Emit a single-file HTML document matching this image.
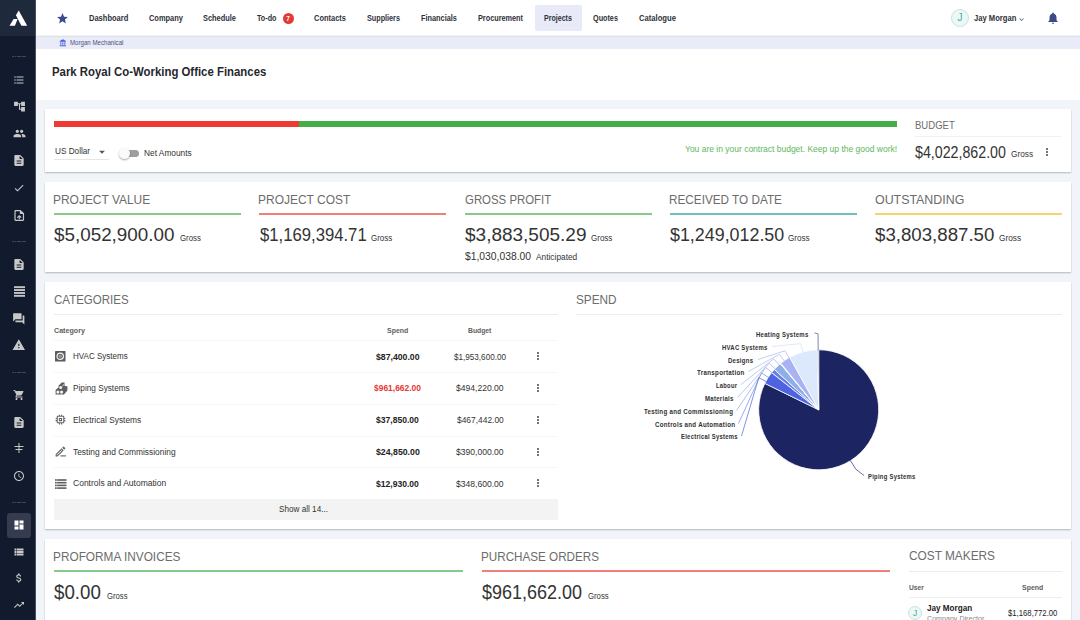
<!DOCTYPE html>
<html><head><meta charset="utf-8">
<style>
*{margin:0;padding:0;box-sizing:border-box}
html,body{width:1080px;height:620px;overflow:hidden;background:#f1f4f8;font-family:"Liberation Sans",sans-serif;color:#222;position:relative}
.abs{position:absolute}
.t{position:absolute;height:20px;line-height:20px;white-space:nowrap;transform-origin:0 0}
.card{position:absolute;background:#fff;box-shadow:0 1px 1.5px rgba(0,0,0,.25)}
.ln{position:absolute;height:2px}
.hl{position:absolute;height:1px;background:#ececec}
.rl{position:absolute;height:1px;background:#f6f6f6}
.si{position:absolute;left:13px;width:12px;height:12px}
.si path{fill:#c8c8c8}
.sep{position:absolute;left:12px;width:13.5px;height:1px;background:repeating-linear-gradient(90deg,#3d4864 0 1.5px,#1e2740 1.5px 2.5px)}
svg.abs{overflow:visible}
</style></head><body>
<!-- sidebar -->
<div class="abs" style="left:0;top:0;width:36px;height:620px;background:#121a2d"></div>
<div class="abs" style="left:0;top:0;width:36px;height:36px;background:#1f293c"></div>
<svg class="abs" style="left:0;top:0" width="36" height="36" viewBox="0 0 36 36">
  <path d="M18.7,10.6 L27.2,25.8 L21.4,25.8 L15.9,15.2 Z" fill="#fff"/>
  <path d="M13.6,19 L17.6,19 L14.9,25.8 L9.5,25.8 Z" fill="#fff"/>
</svg>
<div class="abs" style="left:35px;top:0;width:1px;height:620px;background:#4a505c"></div>

<div class="sep" style="top:56px"></div>
<svg class="si" style="top:73.5px;left:12.5px" viewBox="0 0 24 24"><path d="M4 10.5c-.83 0-1.5.67-1.5 1.5s.67 1.5 1.5 1.5 1.5-.67 1.5-1.5-.67-1.5-1.5-1.5zm0-6c-.83 0-1.5.67-1.5 1.5S3.17 7.5 4 7.5 5.5 6.83 5.5 6 4.83 4.5 4 4.5zm0 12c-.83 0-1.5.68-1.5 1.5s.68 1.5 1.5 1.5 1.5-.68 1.5-1.5-.67-1.5-1.5-1.5zM7 19h14v-2H7v2zm0-6h14v-2H7v2zm0-8v2h14V5H7z"/></svg>
<svg class="si" style="top:99.8px;left:12.5px;width:13px;height:13px" viewBox="0 0 24 24"><path d="M22 11V3h-7v3H9V3H2v8h7V8h2v10h4v3h7v-8h-7v3h-2V8h2v3z"/></svg>
<svg class="si" style="top:127px;left:13px;width:13px;height:13px" viewBox="0 0 24 24"><path d="M16 11c1.66 0 2.99-1.34 2.99-3S17.66 5 16 5c-1.66 0-3 1.34-3 3s1.34 3 3 3zm-8 0c1.66 0 2.99-1.34 2.99-3S9.66 5 8 5C6.34 5 5 6.34 5 8s1.34 3 3 3zm0 2c-2.33 0-7 1.17-7 3.5V19h14v-2.5c0-2.330-4.67-3.5-7-3.5zm8 0c-.29 0-.62.02-.97.05 1.16.84 1.970 1.97 1.97 3.45V19h6v-2.5c0-2.33-4.67-3.5-7-3.5z"/></svg>
<svg class="si" style="top:154px;left:11.5px;width:14px;height:13px" preserveAspectRatio="none" viewBox="0 0 24 24"><path d="M14 2H6c-1.1 0-1.99.9-1.99 2L4 20c0 1.1.89 2 1.99 2H18c1.1 0 2-.9 2-2V8l-6-6zm2 16H8v-2h8v2zm0-4H8v-2h8v2zm-3-5V3.5L18.5 9H13z"/></svg>
<svg class="si" style="top:182px" viewBox="0 0 24 24"><path d="M9 16.17L4.83 12l-1.42 1.41L9 19 21 7l-1.41-1.41z"/></svg>
<svg class="si" style="top:208.5px;left:11.5px;width:14.5px;height:13px" preserveAspectRatio="none" viewBox="0 0 24 24"><path d="M14 2H6c-1.1 0-1.99.9-1.99 2L4 20c0 1.1.89 2 1.99 2H18c1.1 0 2-.9 2-2V8l-6-6zm4 18H6V4h7v5h5v11zM8 15.01l1.41 1.41L11 14.84V19h2v-4.16l1.59 1.59L16 15.01 12.01 11z"/></svg>
<div class="sep" style="top:241px"></div>
<svg class="si" style="top:257.5px;left:11.5px;width:14px;height:13px" preserveAspectRatio="none" viewBox="0 0 24 24"><path d="M14 2H6c-1.1 0-1.99.9-1.99 2L4 20c0 1.1.89 2 1.99 2H18c1.1 0 2-.9 2-2V8l-6-6zm2 16H8v-2h8v2zm0-4H8v-2h8v2zm-3-5V3.5L18.5 9H13z"/></svg>
<svg class="abs" style="left:13.5px;top:286px" width="11" height="11" viewBox="0 0 11 11"><g fill="#c4c4c4"><rect x="0" y="0.2" width="11" height="1.9"/><rect x="0" y="3.1" width="11" height="1.9"/><rect x="0" y="6" width="11" height="1.9"/><rect x="0" y="8.9" width="11" height="1.9"/></g></svg>
<svg class="si" style="top:311.5px;left:12.3px;width:13.5px;height:13.5px" viewBox="0 0 24 24"><path d="M21 6h-2v9H6v2c0 .55.45 1 1 1h11l4 4V7c0-.55-.45-1-1-1zm-4 6V3c0-.55-.45-1-1-1H3c-.55 0-1 .45-1 1v14l4-4h10c.55 0 1-.45 1-1z"/></svg>
<svg class="si" style="top:338px;left:12.2px;width:13.6px;height:13.6px" viewBox="0 0 24 24"><path d="M1 21h22L12 2 1 21zm12-3h-2v-2h2v2zm0-4h-2v-4h2v4z"/></svg>
<div class="sep" style="top:372px"></div>
<svg class="si" style="top:389px" viewBox="0 0 24 24"><path d="M7 18c-1.1 0-1.99.9-1.99 2S5.9 22 7 22s2-.9 2-2-.9-2-2-2zM1 2v2h2l3.6 7.59-1.35 2.45c-.16.28-.25.61-.25.96 0 1.1.9 2 2 2h12v-2H7.42c-.14 0-.25-.11-.25-.25l.03-.12.9-1.63h7.45c.75 0 1.41-.41 1.75-1.03l3.58-6.49A1.003 1.003 0 0020 4H5.21l-.94-2H1zm16 16c-1.1 0-1.99.9-1.99 2s.89 2 1.99 2 2-.9 2-2-.9-2-2-2z"/></svg>
<svg class="si" style="top:415.5px;left:11.5px;width:14px;height:13px" preserveAspectRatio="none" viewBox="0 0 24 24"><path d="M14 2H6c-1.1 0-1.99.9-1.99 2L4 20c0 1.1.89 2 1.99 2H18c1.1 0 2-.9 2-2V8l-6-6zm2 16H8v-2h8v2zm0-4H8v-2h8v2zm-3-5V3.5L18.5 9H13z"/></svg>
<svg class="si" style="top:442px" viewBox="0 0 24 24"><path d="M11 2h2v6h8v2h-8v4h6v2h-6v6h-2v-6H5v-2h6v-4H3V8h8V2z"/></svg>
<svg class="si" style="top:470px" viewBox="0 0 24 24"><path d="M11.99 2C6.47 2 2 6.48 2 12s4.47 10 9.99 10C17.52 22 22 17.52 22 12S17.52 2 11.99 2zM12 20c-4.42 0-8-3.58-8-8s3.58-8 8-8 8 3.58 8 8-3.58 8-8 8zm.5-13H11v6l5.25 3.15.75-1.23-4.5-2.67z"/></svg>
<div class="sep" style="top:502px"></div>
<div class="abs" style="left:7px;top:513px;width:24px;height:25px;background:#353c50;border-radius:3px"></div>
<svg class="si" style="top:519px;left:13px" viewBox="0 0 24 24"><path style="fill:#fff" d="M3 13h8V3H3v10zm0 8h8v-6H3v6zm10 0h8V11h-8v10zm0-18v6h8V3h-8z"/></svg>
<svg class="si" style="top:546px" viewBox="0 0 24 24"><path d="M3 14h4v-4H3v4zm0 5h4v-4H3v4zM3 9h4V5H3v4zm5 5h13v-4H8v4zm0 5h13v-4H8v4zM8 5v4h13V5H8z"/></svg>
<svg class="si" style="top:572px" viewBox="0 0 24 24"><path d="M11.8 10.9c-2.27-.59-3-1.2-3-2.15 0-1.09 1.01-1.85 2.7-1.85 1.78 0 2.440.85 2.5 2.1h2.21c-.07-1.72-1.12-3.3-3.21-3.81V3h-3v2.16c-1.94.42-3.5 1.68-3.5 3.61 0 2.31 1.91 3.46 4.7 4.13 2.5.6 3 1.48 3 2.41 0 .69-.49 1.79-2.7 1.79-2.06 0-2.87-.92-2.98-2.1h-2.2c.12 2.19 1.76 3.42 3.68 3.83V21h3v-2.15c1.95-.37 3.5-1.5 3.5-3.55 0-2.84-2.43-3.81-4.7-4.4z"/></svg>
<svg class="si" style="top:599px" viewBox="0 0 24 24"><path d="M16 6l2.29 2.29-4.88 4.88-4-4L2 16.59 3.41 18l6-6 4 4 6.3-6.290L22 12V6z"/></svg>

<!-- nav -->
<div class="abs" style="left:36px;top:0;width:1044px;height:37px;background:#fff;border-bottom:1px solid #e0e2ea;box-shadow:0 -1px 0 #f3f4f7 inset"></div>
<svg class="abs" style="left:56px;top:11.5px" width="13" height="13" viewBox="0 0 24 24"><path fill="#3b4a8a" d="M12 17.27L18.18 21l-1.64-7.03L22 9.24l-7.19-.61L12 2 9.19 8.63 2 9.24l5.46 4.730L5.82 21z"/></svg>
<div class="abs" style="left:282.5px;top:12.5px;width:11px;height:11px;border-radius:50%;background:#e53935"></div>
<div class="abs" style="left:282.5px;top:12.5px;width:11px;height:11px;line-height:11px;text-align:center;font-size:6.5px;font-weight:bold;color:#fff">7</div>
<div class="abs" style="left:534.5px;top:5px;width:47px;height:26px;background:#e8eaf8;border-radius:2px"></div>
<div class="abs" style="left:951px;top:9px;width:18px;height:18px;border-radius:50%;background:#eaf8f7;border:1px solid #c9e3dc"></div>
<div class="abs" style="left:951px;top:9px;width:18px;height:18px;line-height:18px;text-align:center;font-size:10px;color:#4aae98">J</div>
<svg class="abs" style="left:1017px;top:15px" width="9" height="9" viewBox="0 0 24 24"><path fill="#4a5580" d="M16.59 8.59L12 13.17 7.41 8.59 6 10l6 6 6-6z"/></svg>
<svg class="abs" style="left:1046px;top:11px" width="14" height="14" viewBox="0 0 24 24"><path fill="#3d4a85" d="M12 22c1.1 0 2-.9 2-2h-4c0 1.1.89 2 2 2zm6-6v-5c0-3.07-1.64-5.640-4.5-6.32V4c0-.83-.67-1.5-1.5-1.5s-1.5.67-1.5 1.5v.68C7.63 5.36 6 7.92 6 11v5l-2 2v1h16v-1l-2-2z"/></svg>

<!-- crumb -->
<div class="abs" style="left:36px;top:37px;width:1044px;height:12px;background:#e9ebf8"></div>
<svg class="abs" style="left:59px;top:38.5px" width="8" height="8" viewBox="0 0 24 24"><path fill="#4a5fd8" d="M4 10v7h3v-7H4zm6 0v7h3v-7h-3zM2 22h19v-3H2v3zm14-12v7h3v-7h-3zm-4.5-9L2 6v2h19V6l-9.5-5z"/></svg>
<div class="abs" style="left:36px;top:49px;width:1044px;height:51px;background:#fff"></div>

<!-- card 1 -->
<div class="card" style="left:45px;top:109px;width:1026px;height:63px"></div>
<div class="abs" style="left:54px;top:120.5px;width:245px;height:6px;background:#ef3a33"></div>
<div class="abs" style="left:299px;top:120.5px;width:598px;height:6px;background:#44ad48"></div>
<div class="abs" style="left:54px;top:159px;width:55px;height:1px;background:#e6e6e6"></div>
<svg class="abs" style="left:95px;top:144.5px" width="14" height="14" viewBox="0 0 24 24"><path fill="#555" d="M7 10l5 5 5-5z"/></svg>
<div class="abs" style="left:121.5px;top:149.5px;width:17px;height:7px;border-radius:4px;background:#9e9e9e"></div>
<div class="abs" style="left:118.8px;top:147.8px;width:11.2px;height:11.2px;border-radius:50%;background:#fafafa;box-shadow:0 1px 2px rgba(0,0,0,.35)"></div>
<div class="hl" style="left:915px;top:136px;width:146px;background:#f0f0f0"></div>
<svg class="abs" style="left:1041px;top:146px" width="12" height="12" viewBox="0 0 24 24"><path fill="#555" d="M12 8c1.1 0 2-.9 2-2s-.9-2-2-2-2 .9-2 2 .9 2 2 2zm0 2c-1.1 0-2 .9-2 2s.9 2 2 2 2-.9 2-2-.9-2-2-2zm0 6c-1.1 0-2 .9-2 2s.9 2 2 2 2-.9 2-2-.9-2-2-2z"/></svg>

<!-- card 2 -->
<div class="card" style="left:45px;top:182px;width:1026px;height:89.5px"></div>
<div class="ln" style="left:54px;top:213px;width:187px;background:#86c98a"></div>
<div class="ln" style="left:259px;top:213px;width:187px;background:#ef8077"></div>
<div class="ln" style="left:464.5px;top:213px;width:187px;background:#86c98a"></div>
<div class="ln" style="left:670px;top:213px;width:187px;background:#6fbfbf"></div>
<div class="ln" style="left:875px;top:213px;width:187px;background:#f7d36f"></div>

<!-- card 3 -->
<div class="card" style="left:45px;top:281.5px;width:1026px;height:247px"></div>
<div class="hl" style="left:54px;top:313.5px;width:504px"></div>
<div class="hl" style="left:576px;top:313.5px;width:486px"></div>
<div class="rl" style="left:54px;top:340px;width:504px"></div>
<div class="rl" style="left:54px;top:372px;width:504px"></div>
<div class="rl" style="left:54px;top:403.5px;width:504px"></div>
<div class="rl" style="left:54px;top:435.5px;width:504px"></div>
<div class="rl" style="left:54px;top:467px;width:504px"></div>
<div class="abs" style="left:54px;top:499px;width:504px;height:21px;background:#f3f3f3"></div>
<!-- category icons -->
<svg class="abs" style="left:55.2px;top:351.3px" width="10.5" height="10.5" viewBox="0 0 10.5 10.5"><rect x="0" y="0" width="10.5" height="10.5" rx="0.6" fill="#5c5c5c"/><circle cx="5.25" cy="5.25" r="3.2" fill="none" stroke="#f2f2f2" stroke-width="1.2"/><circle cx="5.25" cy="5.25" r="1.7" fill="#9a9a9a"/></svg>
<svg class="abs" style="left:54.5px;top:381.5px" width="13" height="13" viewBox="0 0 13 13"><path fill="#5e5e5e" d="M0.6 8 L3.6 5.2 L3.6 3.4 L6.8 0.6 L9.6 0.6 L9.6 4 L12.4 4.2 L12.4 8.6 L9 12.4 L0.6 12.4 Z"/><circle cx="2.9" cy="10.1" r="1.55" fill="#f4f4f4"/><circle cx="6.6" cy="10.1" r="1.55" fill="#f4f4f4"/><circle cx="5.7" cy="5.6" r="1.5" fill="#f4f4f4"/><path d="M7.2 4.2 L9.4 2" stroke="#f4f4f4" stroke-width="0.9"/></svg>
<svg class="abs" style="left:54.3px;top:412.8px" width="13" height="13" viewBox="0 0 24 24"><path fill="#666" d="M15 9H9v6h6V9zm-2 4h-2v-2h2v2zm8-2V9h-2V7c0-1.1-.9-2-2-2h-2V3h-2v2h-2V3H9v2H7c-1.1 0-2 .9-2 2v2H3v2h2v2H3v2h2v2c0 1.1.9 2 2 2h2v2h2v-2h2v2h2v-2h2c1.1 0 2-.9 2-2v-2h2v-2h-2v-2h2zm-4 6H7V7h10v10z"/></svg>
<svg class="abs" style="left:54px;top:445px" width="13" height="13" viewBox="0 0 24 24"><path fill="#666" d="M3 17.25V21h3.75L17.81 9.94l-3.75-3.75L3 17.25zM5.92 19H5v-.92l9.06-9.06.92.92L5.92 19zM20.71 5.63l-2.34-2.34a1 1 0 0 0-1.41 0l-1.83 1.83 3.75 3.75 1.83-1.83a1 1 0 0 0 0-1.41z"/><path fill="#666" d="M12 19h10v2.2H12z"/></svg>
<svg class="abs" style="left:55px;top:478.5px" width="11.5" height="10" viewBox="0 0 11.5 10"><g fill="#5e5e5e"><rect x="0" y="0.2" width="11.5" height="1.6"/><rect x="0" y="2.9" width="11.5" height="1.6"/><rect x="0" y="5.6" width="11.5" height="1.6"/><rect x="0" y="8.3" width="11.5" height="1.6"/></g><rect x="1.6" y="0" width="0.6" height="10" fill="#fff" opacity="0.6"/></svg>
<!-- kebabs -->
<svg class="abs" style="left:532px;top:350px" width="12" height="12" viewBox="0 0 24 24"><path fill="#555" d="M12 8c1.1 0 2-.9 2-2s-.9-2-2-2-2 .9-2 2 .9 2 2 2zm0 2c-1.1 0-2 .9-2 2s.9 2 2 2 2-.9 2-2-.9-2-2-2zm0 6c-1.1 0-2 .9-2 2s.9 2 2 2 2-.9 2-2-.9-2-2-2z"/></svg>
<svg class="abs" style="left:532px;top:382px" width="12" height="12" viewBox="0 0 24 24"><path fill="#555" d="M12 8c1.1 0 2-.9 2-2s-.9-2-2-2-2 .9-2 2 .9 2 2 2zm0 2c-1.1 0-2 .9-2 2s.9 2 2 2 2-.9 2-2-.9-2-2-2zm0 6c-1.1 0-2 .9-2 2s.9 2 2 2 2-.9 2-2-.9-2-2-2z"/></svg>
<svg class="abs" style="left:532px;top:414px" width="12" height="12" viewBox="0 0 24 24"><path fill="#555" d="M12 8c1.1 0 2-.9 2-2s-.9-2-2-2-2 .9-2 2 .9 2 2 2zm0 2c-1.1 0-2 .9-2 2s.9 2 2 2 2-.9 2-2-.9-2-2-2zm0 6c-1.1 0-2 .9-2 2s.9 2 2 2 2-.9 2-2-.9-2-2-2z"/></svg>
<svg class="abs" style="left:532px;top:445.5px" width="12" height="12" viewBox="0 0 24 24"><path fill="#555" d="M12 8c1.1 0 2-.9 2-2s-.9-2-2-2-2 .9-2 2 .9 2 2 2zm0 2c-1.1 0-2 .9-2 2s.9 2 2 2 2-.9 2-2-.9-2-2-2zm0 6c-1.1 0-2 .9-2 2s.9 2 2 2 2-.9 2-2-.9-2-2-2z"/></svg>
<svg class="abs" style="left:532px;top:477px" width="12" height="12" viewBox="0 0 24 24"><path fill="#555" d="M12 8c1.1 0 2-.9 2-2s-.9-2-2-2-2 .9-2 2 .9 2 2 2zm0 2c-1.1 0-2 .9-2 2s.9 2 2 2 2-.9 2-2-.9-2-2-2zm0 6c-1.1 0-2 .9-2 2s.9 2 2 2 2-.9 2-2-.9-2-2-2z"/></svg>

<!-- card 4 -->
<div class="card" style="left:45px;top:538.5px;width:1026px;height:90px"></div>
<div class="ln" style="left:54px;top:570px;width:409px;background:#86c98a"></div>
<div class="ln" style="left:481.5px;top:570px;width:408.5px;background:#ef8077"></div>
<div class="hl" style="left:908.5px;top:571px;width:153px"></div>
<div class="rl" style="left:908.5px;top:597px;width:153px;background:#efefef"></div>
<div class="abs" style="left:908px;top:605.5px;width:14px;height:14px;border-radius:50%;background:#eaf8f7;border:1px solid #c9e3dc"></div>
<div class="abs" style="left:908px;top:605.5px;width:14px;height:14px;line-height:14px;text-align:center;font-size:8.5px;color:#4aae98">J</div>

<svg class="abs" style="left:0;top:0" width="1080" height="620" viewBox="0 0 1080 620">
<path d="M818.7,409.8 L818.70,349.80 A60,60 0 1 1 764.82,383.40 Z" fill="#1c2462" stroke="#fff" stroke-width="0.8" stroke-linejoin="round"/>
<path d="M818.7,409.8 L764.82,383.40 A60,60 0 0 1 771.61,372.61 Z" fill="#4d63e0" stroke="#fff" stroke-width="0.8" stroke-linejoin="round"/>
<path d="M818.7,409.8 L771.61,372.61 A60,60 0 0 1 774.32,369.42 Z" fill="#6b80e6" stroke="#fff" stroke-width="0.8" stroke-linejoin="round"/>
<path d="M818.7,409.8 L774.32,369.42 A60,60 0 0 1 780.37,363.64 Z" fill="#90aee6" stroke="#fff" stroke-width="0.8" stroke-linejoin="round"/>
<path d="M818.7,409.8 L780.37,363.64 A60,60 0 0 1 780.54,363.50 Z" fill="#9fb8ee" stroke="#fff" stroke-width="0.8" stroke-linejoin="round"/>
<path d="M818.7,409.8 L780.54,363.50 A60,60 0 0 1 780.70,363.37 Z" fill="#a3b0f0" stroke="#fff" stroke-width="0.8" stroke-linejoin="round"/>
<path d="M818.7,409.8 L780.70,363.37 A60,60 0 0 1 780.86,363.24 Z" fill="#a6b2f0" stroke="#fff" stroke-width="0.8" stroke-linejoin="round"/>
<path d="M818.7,409.8 L780.86,363.24 A60,60 0 0 1 789.79,357.22 Z" fill="#a9b3f2" stroke="#fff" stroke-width="0.8" stroke-linejoin="round"/>
<path d="M818.7,409.8 L789.79,357.22 A60,60 0 0 1 817.44,349.81 Z" fill="#dce8fb" stroke="#fff" stroke-width="0.8" stroke-linejoin="round"/>
<path d="M818.7,409.8 L817.44,349.81 A60,60 0 0 1 818.70,349.80 Z" fill="#4a4f66" stroke="#fff" stroke-width="0.8" stroke-linejoin="round"/>
<path d="M814.5,333 L818.04,333.80 L818.18,350.30" fill="none" stroke="#6a72a0" stroke-width="0.85" stroke-linejoin="round"/>
<path d="M772,346.5 L800.74,343.70 L803.10,352.38" fill="none" stroke="#d8e5fa" stroke-width="0.85" stroke-linejoin="round"/>
<path d="M758,359.5 L784.91,350.79 L789.13,358.17" fill="none" stroke="#bcc3f4" stroke-width="0.85" stroke-linejoin="round"/>
<path d="M748.5,371.5 L779.50,354.23 L784.40,361.18" fill="none" stroke="#b5c8f0" stroke-width="0.85" stroke-linejoin="round"/>
<path d="M741,384.5 L773.73,358.79 L779.35,365.17" fill="none" stroke="#b0c0f0" stroke-width="0.85" stroke-linejoin="round"/>
<path d="M737.5,397.5 L769.21,363.16 L775.40,368.99" fill="none" stroke="#a8bcf0" stroke-width="0.85" stroke-linejoin="round"/>
<path d="M736.5,410.5 L765.56,367.38 L772.20,372.68" fill="none" stroke="#9cb6ea" stroke-width="0.85" stroke-linejoin="round"/>
<path d="M738.5,423.5 L761.54,372.96 L768.69,377.57" fill="none" stroke="#8a9cec" stroke-width="0.85" stroke-linejoin="round"/>
<path d="M741.5,436 L758.77,377.67 L766.26,381.68" fill="none" stroke="#6a7ee6" stroke-width="0.85" stroke-linejoin="round"/>
<path d="M864,475.5 L855.79,469.16 L850.23,460.26" fill="none" stroke="#4a5590" stroke-width="0.85" stroke-linejoin="round"/><!--PIELINES--></svg>
<div class="t" style="left:89.00px;top:7.95px;font-size:8.8px;font-weight:bold;color:#2f3139;transform:scaleX(0.8558)">Dashboard</div>
<div class="t" style="left:149.00px;top:7.95px;font-size:8.8px;font-weight:bold;color:#2f3139;transform:scaleX(0.8460)">Company</div>
<div class="t" style="left:203.00px;top:7.95px;font-size:8.8px;font-weight:bold;color:#2f3139;transform:scaleX(0.8415)">Schedule</div>
<div class="t" style="left:257.00px;top:7.95px;font-size:8.8px;font-weight:bold;color:#2f3139;transform:scaleX(0.8198)">To-do</div>
<div class="t" style="left:314.00px;top:7.95px;font-size:8.8px;font-weight:bold;color:#2f3139;transform:scaleX(0.8478)">Contacts</div>
<div class="t" style="left:367.00px;top:7.95px;font-size:8.8px;font-weight:bold;color:#2f3139;transform:scaleX(0.8211)">Suppliers</div>
<div class="t" style="left:421.00px;top:7.95px;font-size:8.8px;font-weight:bold;color:#2f3139;transform:scaleX(0.8347)">Financials</div>
<div class="t" style="left:478.00px;top:7.95px;font-size:8.8px;font-weight:bold;color:#2f3139;transform:scaleX(0.8282)">Procurement</div>
<div class="t" style="left:544.00px;top:7.95px;font-size:8.8px;font-weight:bold;color:#2f3139;transform:scaleX(0.8041)">Projects</div>
<div class="t" style="left:593.00px;top:7.95px;font-size:8.8px;font-weight:bold;color:#2f3139;transform:scaleX(0.8221)">Quotes</div>
<div class="t" style="left:639.00px;top:7.95px;font-size:8.8px;font-weight:bold;color:#2f3139;transform:scaleX(0.8679)">Catalogue</div>
<div class="t" style="left:974.00px;top:7.95px;font-size:8.8px;font-weight:bold;color:#2f3139;transform:scaleX(0.8658)">Jay Morgan</div>
<div class="t" style="left:70.00px;top:33.02px;font-size:6.3px;font-weight:normal;color:#4b5080;transform:scaleX(0.9716)">Morgan Mechanical</div>
<div class="t" style="left:52.00px;top:61.80px;font-size:12.4px;font-weight:bold;color:#26272d;transform:scaleX(0.9190)">Park Royal Co-Working Office Finances</div>
<div class="t" style="left:55.00px;top:141.31px;font-size:9.2px;font-weight:normal;color:#333;transform:scaleX(0.8917)">US Dollar</div>
<div class="t" style="left:144.00px;top:143.09px;font-size:8.4px;font-weight:normal;color:#333;transform:scaleX(0.9954)">Net Amounts</div>
<div class="t" style="left:685.00px;top:138.72px;font-size:8.6px;font-weight:normal;color:#5cb85c;transform:scaleX(0.9879)">You are in your contract budget. Keep up the good work!</div>
<div class="t" style="left:915.00px;top:115.49px;font-size:11px;font-weight:normal;color:#6c6c6c;transform:scaleX(0.8673)">BUDGET</div>
<div class="t" style="left:915.00px;top:143.46px;font-size:16px;font-weight:normal;color:#333;transform:scaleX(0.8885)">$4,022,862.00</div>
<div class="t" style="left:1011.00px;top:145.36px;font-size:8.2px;font-weight:normal;color:#333;transform:scaleX(1.0119)">Gross</div>
<div class="t" style="left:53.47px;top:189.96px;font-size:12.8px;font-weight:normal;color:#6c6c6c;transform:scaleX(0.9342)">PROJECT VALUE</div>
<div class="t" style="left:258.06px;top:189.96px;font-size:12.8px;font-weight:normal;color:#6c6c6c;transform:scaleX(0.9356)">PROJECT COST</div>
<div class="t" style="left:464.80px;top:189.96px;font-size:12.8px;font-weight:normal;color:#6c6c6c;transform:scaleX(0.8918)">GROSS PROFIT</div>
<div class="t" style="left:668.78px;top:189.96px;font-size:12.8px;font-weight:normal;color:#6c6c6c;transform:scaleX(0.9177)">RECEIVED TO DATE</div>
<div class="t" style="left:875.00px;top:189.96px;font-size:12.8px;font-weight:normal;color:#6c6c6c;transform:scaleX(0.9690)">OUTSTANDING</div>
<div class="t" style="left:54.00px;top:224.95px;font-size:19.2px;font-weight:normal;color:#333;transform:scaleX(0.9817)">$5,052,900.00</div>
<div class="t" style="left:179.80px;top:228.12px;font-size:8.6px;font-weight:normal;color:#333;transform:scaleX(0.9106)">Gross</div>
<div class="t" style="left:259.50px;top:224.95px;font-size:19.2px;font-weight:normal;color:#333;transform:scaleX(0.8694)">$1,169,394.71</div>
<div class="t" style="left:371.00px;top:228.12px;font-size:8.6px;font-weight:normal;color:#333;transform:scaleX(0.9283)">Gross</div>
<div class="t" style="left:464.80px;top:224.95px;font-size:19.2px;font-weight:normal;color:#333;transform:scaleX(0.9899)">$3,883,505.29</div>
<div class="t" style="left:591.00px;top:228.12px;font-size:8.6px;font-weight:normal;color:#333;transform:scaleX(0.9327)">Gross</div>
<div class="t" style="left:669.70px;top:224.95px;font-size:19.2px;font-weight:normal;color:#333;transform:scaleX(0.9309)">$1,249,012.50</div>
<div class="t" style="left:788.40px;top:228.12px;font-size:8.6px;font-weight:normal;color:#333;transform:scaleX(0.9415)">Gross</div>
<div class="t" style="left:875.00px;top:224.95px;font-size:19.2px;font-weight:normal;color:#333;transform:scaleX(0.9727)">$3,803,887.50</div>
<div class="t" style="left:999.20px;top:228.12px;font-size:8.6px;font-weight:normal;color:#333;transform:scaleX(0.9636)">Gross</div>
<div class="t" style="left:464.80px;top:246.36px;font-size:10.5px;font-weight:normal;color:#333;transform:scaleX(0.9835)">$1,030,038.00</div>
<div class="t" style="left:536.30px;top:247.66px;font-size:8.2px;font-weight:normal;color:#333;transform:scaleX(1.0182)">Anticipated</div>
<div class="t" style="left:54.40px;top:289.56px;font-size:12.8px;font-weight:normal;color:#6c6c6c;transform:scaleX(0.8991)">CATEGORIES</div>
<div class="t" style="left:576.00px;top:289.56px;font-size:12.8px;font-weight:normal;color:#6c6c6c;transform:scaleX(0.9191)">SPEND</div>
<div class="t" style="left:54.00px;top:320.57px;font-size:7px;font-weight:bold;color:#606060;transform:scaleX(1.0181)">Category</div>
<div class="t" style="left:387.00px;top:320.57px;font-size:7px;font-weight:bold;color:#606060;transform:scaleX(0.9946)">Spend</div>
<div class="t" style="left:468.00px;top:320.57px;font-size:7px;font-weight:bold;color:#606060;transform:scaleX(0.9687)">Budget</div>
<div class="t" style="left:72.80px;top:346.42px;font-size:8.9px;font-weight:normal;color:#333;transform:scaleX(0.9041)">HVAC Systems</div>
<div class="t" style="left:375.60px;top:346.52px;font-size:8.6px;font-weight:bold;color:#222;transform:scaleX(1.0108)">$87,400.00</div>
<div class="t" style="left:453.80px;top:346.52px;font-size:8.6px;font-weight:normal;color:#333;transform:scaleX(0.9460)">$1,953,600.00</div>
<div class="t" style="left:72.80px;top:378.17px;font-size:8.9px;font-weight:normal;color:#333;transform:scaleX(0.9267)">Piping Systems</div>
<div class="t" style="left:373.80px;top:378.27px;font-size:8.6px;font-weight:bold;color:#e53935;transform:scaleX(0.9831)">$961,662.00</div>
<div class="t" style="left:456.00px;top:378.27px;font-size:8.6px;font-weight:normal;color:#333;transform:scaleX(0.9956)">$494,220.00</div>
<div class="t" style="left:72.80px;top:409.92px;font-size:8.9px;font-weight:normal;color:#333;transform:scaleX(0.9404)">Electrical Systems</div>
<div class="t" style="left:376.00px;top:410.02px;font-size:8.6px;font-weight:bold;color:#222;transform:scaleX(0.9947)">$37,850.00</div>
<div class="t" style="left:456.50px;top:410.02px;font-size:8.6px;font-weight:normal;color:#333;transform:scaleX(0.9789)">$467,442.00</div>
<div class="t" style="left:72.80px;top:441.67px;font-size:8.9px;font-weight:normal;color:#333;transform:scaleX(0.9458)">Testing and Commissioning</div>
<div class="t" style="left:375.50px;top:441.77px;font-size:8.6px;font-weight:bold;color:#222;transform:scaleX(1.0178)">$24,850.00</div>
<div class="t" style="left:456.00px;top:441.77px;font-size:8.6px;font-weight:normal;color:#333;transform:scaleX(0.9956)">$390,000.00</div>
<div class="t" style="left:72.80px;top:473.42px;font-size:8.9px;font-weight:normal;color:#333;transform:scaleX(0.9586)">Controls and Automation</div>
<div class="t" style="left:376.00px;top:473.52px;font-size:8.6px;font-weight:bold;color:#222;transform:scaleX(0.9947)">$12,930.00</div>
<div class="t" style="left:456.00px;top:473.52px;font-size:8.6px;font-weight:normal;color:#333;transform:scaleX(0.9956)">$348,600.00</div>
<div class="t" style="left:279.40px;top:499.32px;font-size:8.6px;font-weight:normal;color:#333;transform:scaleX(0.9491)">Show all 14...</div>
<div class="t" style="left:756.00px;top:325.08px;font-size:6.4px;font-weight:bold;color:#303030;letter-spacing:0.3px;transform:scaleX(0.9386)">Heating Systems</div>
<div class="t" style="left:721.80px;top:338.18px;font-size:6.4px;font-weight:bold;color:#303030;letter-spacing:0.3px;transform:scaleX(0.9263)">HVAC Systems</div>
<div class="t" style="left:727.90px;top:351.08px;font-size:6.4px;font-weight:bold;color:#303030;letter-spacing:0.3px;transform:scaleX(0.9407)">Designs</div>
<div class="t" style="left:696.60px;top:362.88px;font-size:6.4px;font-weight:bold;color:#303030;letter-spacing:0.3px;transform:scaleX(0.9726)">Transportation</div>
<div class="t" style="left:716.30px;top:375.98px;font-size:6.4px;font-weight:bold;color:#303030;letter-spacing:0.3px;transform:scaleX(0.9041)">Labour</div>
<div class="t" style="left:705.40px;top:388.88px;font-size:6.4px;font-weight:bold;color:#303030;letter-spacing:0.3px;transform:scaleX(0.9427)">Materials</div>
<div class="t" style="left:644.30px;top:401.78px;font-size:6.4px;font-weight:bold;color:#303030;letter-spacing:0.3px;transform:scaleX(0.9633)">Testing and Commissioning</div>
<div class="t" style="left:654.70px;top:414.98px;font-size:6.4px;font-weight:bold;color:#303030;letter-spacing:0.3px;transform:scaleX(0.9631)">Controls and Automation</div>
<div class="t" style="left:681.30px;top:427.28px;font-size:6.4px;font-weight:bold;color:#303030;letter-spacing:0.3px;transform:scaleX(0.9189)">Electrical Systems</div>
<div class="t" style="left:868.00px;top:466.78px;font-size:6.4px;font-weight:bold;color:#303030;letter-spacing:0.3px;transform:scaleX(0.9165)">Piping Systems</div>
<div class="t" style="left:53.48px;top:546.56px;font-size:12.8px;font-weight:normal;color:#6c6c6c;transform:scaleX(0.9241)">PROFORMA INVOICES</div>
<div class="t" style="left:480.99px;top:546.56px;font-size:12.8px;font-weight:normal;color:#6c6c6c;transform:scaleX(0.9118)">PURCHASE ORDERS</div>
<div class="t" style="left:908.70px;top:546.26px;font-size:12.8px;font-weight:normal;color:#6c6c6c;transform:scaleX(0.9254)">COST MAKERS</div>
<div class="t" style="left:54.00px;top:582.01px;font-size:19.6px;font-weight:normal;color:#333;transform:scaleX(0.9565)">$0.00</div>
<div class="t" style="left:107.00px;top:585.95px;font-size:8.8px;font-weight:normal;color:#333;transform:scaleX(0.8769)">Gross</div>
<div class="t" style="left:482.00px;top:582.01px;font-size:19.6px;font-weight:normal;color:#333;transform:scaleX(0.9187)">$961,662.00</div>
<div class="t" style="left:587.80px;top:585.95px;font-size:8.8px;font-weight:normal;color:#333;transform:scaleX(0.8810)">Gross</div>
<div class="t" style="left:908.70px;top:577.57px;font-size:7px;font-weight:bold;color:#606060;transform:scaleX(0.9595)">User</div>
<div class="t" style="left:1022.00px;top:577.57px;font-size:7px;font-weight:bold;color:#606060;transform:scaleX(0.9946)">Spend</div>
<div class="t" style="left:927.20px;top:597.95px;font-size:8.8px;font-weight:bold;color:#222;transform:scaleX(0.9235)">Jay Morgan</div>
<div class="t" style="left:927.20px;top:609.44px;font-size:7.4px;font-weight:normal;color:#888;transform:scaleX(0.9618)">Company Director</div>
<div class="t" style="left:1007.80px;top:603.02px;font-size:8.6px;font-weight:normal;color:#222;transform:scaleX(0.8989)">$1,168,772.00</div>
</body></html>
